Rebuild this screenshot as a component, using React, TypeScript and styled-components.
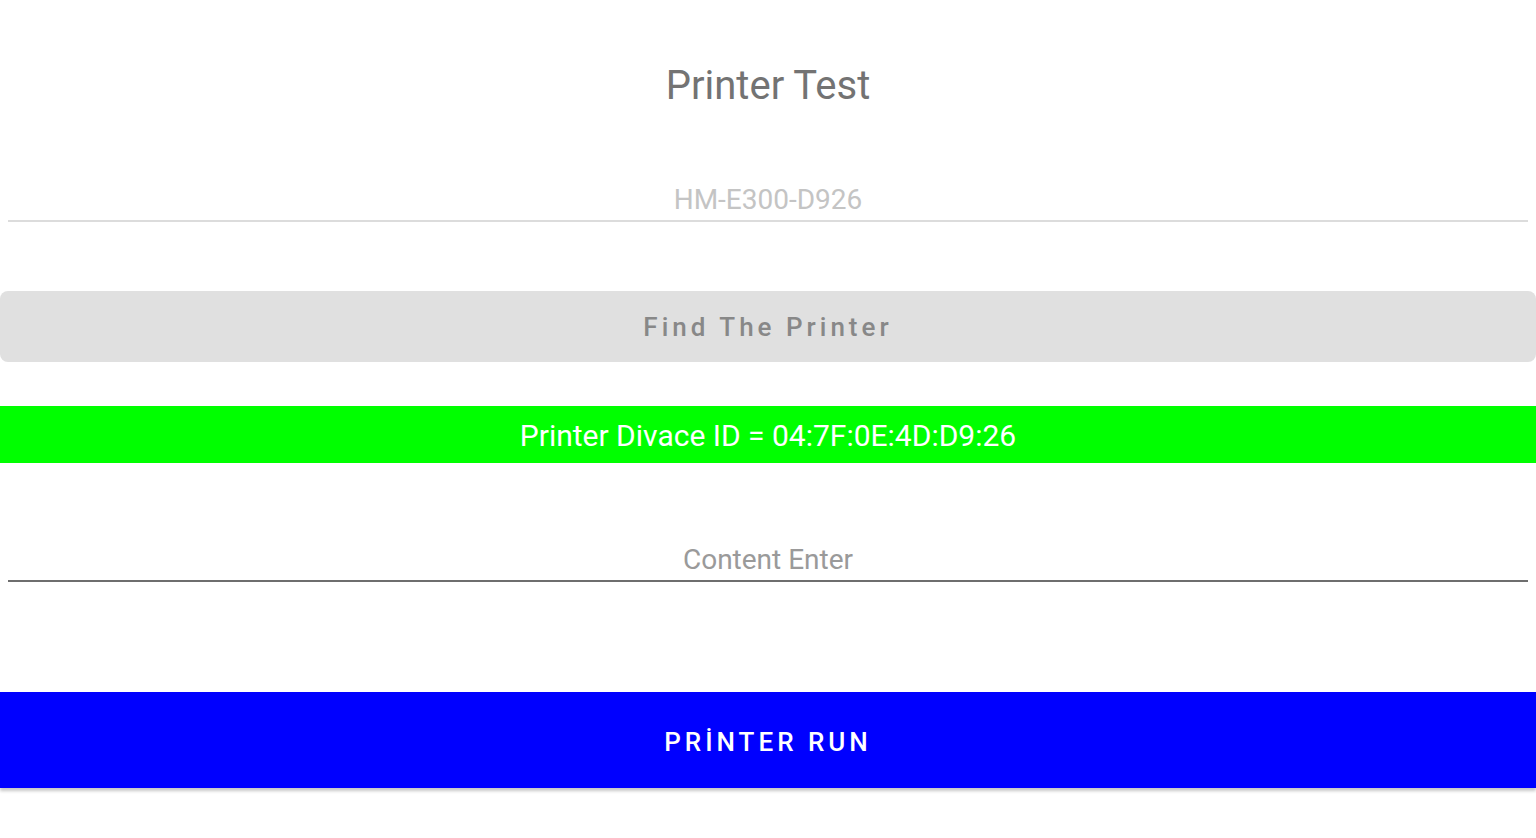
import React from "react";
import styled, { createGlobalStyle } from "styled-components";

const Global = createGlobalStyle`
  html, body { margin: 0; padding: 0; background: #ffffff; }
  body { font-family: Roboto, "Noto Sans", sans-serif; }
`;

const Page = styled.div`
  width: 1536px;
  height: 838px;
  display: flex;
  flex-direction: column;
  background: #fff;
`;

const Title = styled.h1`
  margin: 60px 0 0;
  height: 52px;
  font-size: 40px;
  line-height: 52px;
  font-weight: 400;
  color: #737373;
  text-align: center;
`;

const Field = styled.input<{ $line: string; $ph: string; $thick: number }>`
  display: block;
  box-sizing: border-box;
  margin: 0 8px;
  width: calc(100% - 16px);
  border: none;
  border-bottom: ${(p) => p.$thick}px solid ${(p) => p.$line};
  outline: none;
  background: transparent;
  text-align: center;
  font-family: Roboto, sans-serif;
  font-size: 28px;
  padding: 0;
  height: 44px;
  line-height: 40px;
  &::placeholder { color: ${(p) => p.$ph}; opacity: 1; }
`;

const GrayButton = styled.button`
  margin: 69px 0 0;
  height: 71px;
  width: 100%;
  border: none;
  border-radius: 8px;
  background: #e0e0e0;
  color: #888888;
  font-family: Roboto, sans-serif;
  font-size: 26px;
  font-weight: 500;
  letter-spacing: 4px;
`;

const StatusBar = styled.div`
  margin-top: 44px;
  height: 57px;
  background: #00ff00;
  color: #ffffff;
  display: flex;
  align-items: center;
  justify-content: center;
  font-size: 30px;
  padding-top: 2px;
  box-sizing: border-box;
`;

const RunButton = styled.button`
  height: 96px;
  width: 100%;
  border: none;
  background: #0000ff;
  color: #fff;
  font-family: Roboto, sans-serif;
  font-size: 26px;
  font-weight: 500;
  letter-spacing: 4px;
  padding-top: 4px;
  box-shadow: 0 3px 3px rgba(0, 0, 0, 0.22);
`;

const Spacer = styled.div<{ $h: number }>`
  height: ${(p) => p.$h}px;
  flex-shrink: 0;
`;

export default function App() {
  return (
    <Page>
      <Global />
      <Title>Printer Test</Title>
      <Spacer $h={66} />
      <Field $line="#dcdcdc" $ph="#c4c4c4" $thick={2} placeholder="HM-E300-D926" />
      <GrayButton>Find The Printer</GrayButton>
      <StatusBar>Printer Divace ID = 04:7F:0E:4D:D9:26</StatusBar>
      <Spacer $h={75} />
      <Field $line="#6e6e6e" $ph="#9a9a9a" $thick={2} placeholder="Content Enter" />
      <Spacer $h={110} />
      <RunButton>PRİNTER RUN</RunButton>
    </Page>
  );
}
